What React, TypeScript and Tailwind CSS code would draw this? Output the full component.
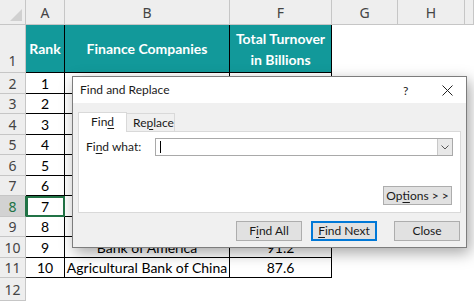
import React from "react";

const COLS = ["A", "B", "F", "G", "H", ""];
const ROW_H = ["h-[21px]", "h-[20px]", "h-[21px]", "h-[20px]", "h-[21px]", "h-[20px]", "h-[21px]", "h-[20px]", "h-[21px]", "h-[20px]"];

const data: { rank: string; name: string; value: string }[] = [
  { rank: "1", name: "", value: "" },
  { rank: "2", name: "", value: "" },
  { rank: "3", name: "", value: "" },
  { rank: "4", name: "", value: "" },
  { rank: "5", name: "", value: "" },
  { rank: "6", name: "", value: "" },
  { rank: "7", name: "", value: "" },
  { rank: "8", name: "", value: "" },
  { rank: "9", name: "Bank of America", value: "91.2" },
  { rank: "10", name: "Agricultural Bank of China", value: "87.6" },
];

const cellFont = { fontFamily: "Lato, 'Liberation Sans', sans-serif" };
const hdrFont = { fontFamily: "'Noto Sans', 'Liberation Sans', sans-serif" };
const uiFont = { fontFamily: "Lato, 'Noto Sans', 'Liberation Sans', sans-serif" };

function U({ children }: { children: React.ReactNode }) {
  return <span className="underline underline-offset-2 decoration-1">{children}</span>;
}

function Dialog() {
  return (
    <div
      className="absolute left-[72px] top-[76px] w-[395px] h-[172px] border border-[#7d7d7d] bg-[#f0f0f0] flex flex-col shadow-[3px_5px_14px_rgba(0,0,0,0.35)] text-[12px] text-[#1a1a1a]"
      style={uiFont}
    >
      <div className="h-[26px] bg-white flex items-center pl-[7px] shrink-0 relative">
        <span>Find and Replace</span>
        <span className="absolute left-[330px] top-[5px] text-[12px]">?</span>
        <svg className="absolute left-[369px] top-[8px]" width="11" height="11" viewBox="0 0 11 11">
          <path d="M0.5 0.5 L10.5 10.5 M10.5 0.5 L0.5 10.5" stroke="#222" strokeWidth="1" />
        </svg>
      </div>
      <div className="flex-1 flex flex-col px-[5px] pt-[8px]">
        <div className="flex items-end h-[20px]">
          <div className="w-[49px] h-[20px] bg-white border border-b-0 border-[#d9d9d9] flex items-center pl-[12px] relative z-10 -mb-px pb-px">
            <span>
              Fin<U>d</U>
            </span>
          </div>
          <div className="w-[48px] h-[18px] bg-[#f0f0f0] border border-l-0 border-b-0 border-[#d9d9d9] flex items-center pl-[6px]">
            <span>
              Re<U>p</U>lace
            </span>
          </div>
        </div>
        <div className="w-[383px] h-[82px] bg-white border border-[#d9d9d9] flex flex-col px-[7px] pt-[6px]">
          <div className="flex items-center h-[18px]">
            <span className="w-[69px] shrink-0">
              Fi<U>n</U>d what:
            </span>
            <div className="w-[298px] h-[18px] border border-[#a9a9a9] flex items-center justify-between bg-white">
              <span className="ml-[4px] w-px h-[12px] bg-black" />
              <div className="w-[15px] h-[16px] bg-[#e8e8e8] border-l border-[#c8c8c8] flex items-center justify-center">
                <svg width="8" height="5" viewBox="0 0 8 5">
                  <path d="M0.5 0.5 L4 4 L7.5 0.5" stroke="#555" strokeWidth="1" fill="none" />
                </svg>
              </div>
            </div>
          </div>
          <div className="flex-1" />
          <div className="flex justify-end pb-[7px] pr-px">
            <div className="w-[69px] h-[19px] bg-[#e1e1e1] border border-[#adadad] flex items-center justify-center">
              <span>
                Op<U>t</U>ions &gt; &gt;
              </span>
            </div>
          </div>
        </div>
        <div className="flex justify-end mt-[8px] pr-[1px] gap-[9px]">
          <div className="w-[66px] h-[20px] bg-[#e1e1e1] border border-[#adadad] flex items-center justify-center">
            <span>
              F<U>i</U>nd All
            </span>
          </div>
          <div className="w-[66px] h-[20px] bg-[#e1e1e1] border-2 border-[#0078d7] flex items-center justify-center mr-[8px]">
            <span>
              <U>F</U>ind Next
            </span>
          </div>
          <div className="w-[66px] h-[20px] bg-[#e1e1e1] border border-[#adadad] flex items-center justify-center">
            <span>Close</span>
          </div>
        </div>
      </div>
    </div>
  );
}

export default function App() {
  return (
    <div className="relative w-[474px] h-[301px] overflow-hidden bg-white">
      <div className="grid grid-cols-[26px_39px_165px_102px_66px_67px_9px]">
        {/* header row */}
        <div className="h-[25px] bg-[#eeeeee] border-r border-b border-[#c6c6c6] relative">
          <svg className="absolute right-[3px] bottom-[3px]" width="12" height="12" viewBox="0 0 12 12">
            <path d="M12 0 L12 12 L0 12 Z" fill="#d0d0d0" />
          </svg>
        </div>
        {COLS.map((c, i) => (
          <div
            key={i}
            className="h-[25px] bg-[#eeeeee] border-r border-b border-[#c6c6c6] flex items-center justify-center text-[14px] text-[#444]"
            style={hdrFont}
          >
            {c}
          </div>
        ))}

        {/* row 1 */}
        <div
          className="h-[48px] bg-[#eeeeee] border-r border-b border-[#c6c6c6] flex items-end justify-center pb-[1px] text-[14px] text-[#444]"
          style={hdrFont}
        >
          1
        </div>
        <div className="h-[48px] bg-[#12999a] border-r border-b border-black flex items-center justify-center text-white font-bold text-[14px]" style={cellFont}>
          Rank
        </div>
        <div className="h-[48px] bg-[#12999a] border-r border-b border-black flex items-center justify-center text-white font-bold text-[14px]" style={cellFont}>
          Finance Companies
        </div>
        <div
          className="h-[48px] bg-[#12999a] border-r border-b border-black flex items-center justify-center text-center text-white font-bold text-[14px] leading-[21px]"
          style={cellFont}
        >
          Total Turnover
          <br />
          in Billions
        </div>
        <div className="h-[48px]" />
        <div className="h-[48px]" />
        <div className="h-[48px]" />

        {data.map((r, i) => {
          const h = ROW_H[i];
          const sel = i === 6;
          return (
            <React.Fragment key={i}>
              <div
                className={`${h} border-r border-b flex items-center justify-center text-[14px] ${
                  sel ? "bg-[#d2d2d2] text-[#217346] border-r-[#217346] border-b-[#c6c6c6]" : "bg-[#eeeeee] text-[#444] border-[#c6c6c6]"
                }`}
                style={hdrFont}
              >
                {i + 2}
              </div>
              <div
                className={`${h} border-r border-b border-black flex items-center justify-center text-[14px] text-black ${
                  sel ? "outline-2 outline-[#217346] -outline-offset-2" : ""
                }`}
                style={cellFont}
              >
                {r.rank}
              </div>
              <div className={`${h} border-r border-b border-black flex items-center justify-center text-[14px] text-black whitespace-nowrap`} style={cellFont}>
                {r.name}
              </div>
              <div className={`${h} border-r border-b border-black flex items-center justify-center text-[14px] text-black`} style={cellFont}>
                {r.value}
              </div>
              <div className={h} />
              <div className={h} />
              <div className={h} />
            </React.Fragment>
          );
        })}

        {/* row 12 */}
        <div className="h-[23px] bg-[#eeeeee] border-r border-b border-[#c6c6c6] flex items-center justify-center text-[14px] text-[#444]" style={hdrFont}>
          12
        </div>
        <div className="h-[23px]" />
        <div className="h-[23px]" />
        <div className="h-[23px]" />
        <div className="h-[23px]" />
        <div className="h-[23px]" />
        <div className="h-[23px]" />
      </div>
      <Dialog />
    </div>
  );
}
